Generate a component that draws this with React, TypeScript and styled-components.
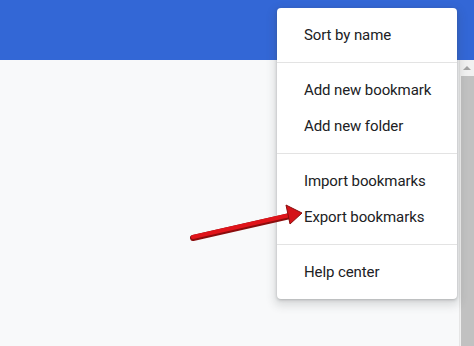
import styled, { createGlobalStyle } from 'styled-components';

const GlobalStyle = createGlobalStyle`
  html, body {
    margin: 0;
    padding: 0;
    width: 474px;
    height: 346px;
    overflow: hidden;
    font-family: Roboto, 'Liberation Sans', Arial, sans-serif;
  }
`;

const Page = styled.div`
  position: relative;
  display: flex;
  flex-direction: column;
  width: 474px;
  height: 346px;
  background: #f8f9fa;
`;

const Header = styled.div`
  height: 60px;
  background: #3367d6;
`;

const Body = styled.div`
  flex: 1;
  display: flex;
`;

const Content = styled.div`
  flex: 1;
  background: #f8f9fa;
`;

const Scrollbar = styled.div`
  width: 14px;
  display: flex;
  flex-direction: column;
  background: #f1f1f1;
  border-left: 1px solid #e6e6e6;
`;

const ScrollArrow = styled.div`
  height: 16px;
  display: flex;
  align-items: center;
  justify-content: center;
  &::before {
    content: '';
    border-left: 4px solid transparent;
    border-right: 4px solid transparent;
    border-bottom: 4px solid #a3a3a3;
  }
`;

const ScrollThumb = styled.div`
  flex: 1;
  margin-left: 1px;
  background: #c1c1c1;
`;

const Menu = styled.div`
  position: absolute;
  top: 8px;
  left: 277px;
  width: 180px;
  background: #ffffff;
  border-radius: 4px;
  box-shadow: 0 1px 3px rgba(60, 64, 67, 0.3), 0 4px 8px 3px rgba(60, 64, 67, 0.15);
  display: flex;
  flex-direction: column;
`;

const Section = styled.div`
  display: flex;
  flex-direction: column;
  padding: 9px 0;
  & + & {
    border-top: 1px solid #e3e3e3;
  }
`;

const Item = styled.div`
  height: 36px;
  display: flex;
  align-items: center;
  padding-left: 27px;
  font-size: 15px;
  letter-spacing: -0.1px;
  color: #202124;
  white-space: nowrap;
`;

const Arrow = styled.svg`
  position: absolute;
  left: 186px;
  top: 200px;
`;

const sections = [
  ['Sort by name'],
  ['Add new bookmark', 'Add new folder'],
  ['Import bookmarks', 'Export bookmarks'],
  ['Help center'],
];

const App = () => {
  return (
    <>
      <GlobalStyle />
      <Page>
        <Header />
        <Body>
          <Content />
          <Scrollbar>
            <ScrollArrow />
            <ScrollThumb />
          </Scrollbar>
        </Body>
        <Menu>
          {sections.map((items) => (
            <Section key={items[0]}>
              {items.map((label) => (
                <Item key={label}>{label}</Item>
              ))}
            </Section>
          ))}
        </Menu>
        <Arrow width="124" height="46" viewBox="0 0 124 46">
          <line x1="7" y1="38" x2="104" y2="16" stroke="#8a0d0d" strokeWidth="6" strokeLinecap="round" />
          <line x1="7" y1="37" x2="104" y2="15" stroke="#e0141a" strokeWidth="4" strokeLinecap="round" />
          <polygon points="116,13 100,5 104,24" fill="#d41218" stroke="#8a0d0d" strokeWidth="1" strokeLinejoin="round" />
        </Arrow>
      </Page>
    </>
  );
};

export default App;
